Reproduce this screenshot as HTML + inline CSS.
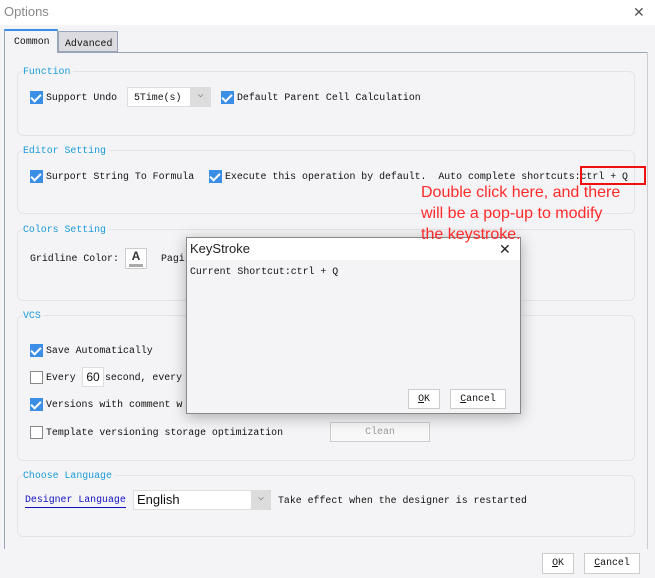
<!DOCTYPE html>
<html><head><meta charset="utf-8"><style>
*{margin:0;padding:0;box-sizing:border-box}
body{width:655px;height:578px;background:#f4f4f6;position:relative;overflow:hidden;font-family:"Liberation Mono","Noto Serif CJK SC",monospace;font-size:9.9px;color:#111}
.a{position:absolute;white-space:pre}
.t{line-height:14px}
.cb{position:absolute;width:13px;height:13px;background:#3a8ee6}
.cb::after{content:"";position:absolute;left:3px;top:1px;width:4px;height:8px;border:solid #fff;border-width:0 2px 2px 0;transform:rotate(45deg)}
.ucb{position:absolute;width:13px;height:13px;border:1px solid #888;background:#fff}
.gb{position:absolute;border:1px solid #e4e4e8;border-radius:6px}
.gt{position:absolute;color:#1a9ad8;background:#f4f4f6;padding-right:3px;line-height:13px}
.btn{position:absolute;background:#fff;border:1px solid #ccc;text-align:center;line-height:18px}
</style></head><body>
<div class="a" style="left:0;top:0;width:655px;height:25px;background:#fff"></div>
<div class="a" style="left:4px;top:4px;font:13px 'Liberation Sans',sans-serif;color:#888">Options</div>
<div class="a" style="left:633px;top:4px;font:14px 'Liberation Sans',sans-serif;color:#555">✕</div>
<div class="a" style="left:4px;top:52px;width:644px;height:497px;border-left:1px solid #9aa4b8;border-top:1px solid #9aa4b8"></div>
<div class="a" style="left:647px;top:52px;width:1px;height:497px;background:#ccc"></div>
<div class="a t" style="left:4px;top:29px;width:54px;height:24px;background:#f4f4f6;border:1px solid #9aa4b8;border-top:2px solid #3a8ee6;border-bottom:none;padding:4px 0 0 9px">Common</div>
<div class="a t" style="left:58px;top:31px;width:60px;height:21px;background:#dcdce0;border:1px solid #9aa4b8;padding:5px 0 0 6px">Advanced</div>

<div class="gb" style="left:17px;top:71px;width:618px;height:65px"></div>
<div class="gt a" style="left:23px;top:65px">Function</div>
<div class="cb" style="left:30px;top:91px"></div>
<div class="a t" style="left:46px;top:91px">Support Undo</div>
<div class="a" style="left:127px;top:87px;width:84px;height:20px;background:#fff;border:1px solid #ddd"></div>
<div class="a" style="left:190px;top:87px;width:21px;height:20px;background:#dcdcdc;color:#666;text-align:center;font-size:10px;line-height:18px">⌵</div>
<div class="a t" style="left:134px;top:91px">5Time(s)</div>
<div class="cb" style="left:221px;top:91px"></div>
<div class="a t" style="left:237px;top:91px">Default Parent Cell Calculation</div>

<div class="gb" style="left:17px;top:150px;width:618px;height:64px"></div>
<div class="gt a" style="left:23px;top:144px">Editor Setting</div>
<div class="cb" style="left:30px;top:170px"></div>
<div class="a t" style="left:46px;top:170px">Surport String To Formula</div>
<div class="cb" style="left:209px;top:170px"></div>
<div class="a t" style="left:225px;top:170px">Execute this operation by default.  Auto complete shortcuts:ctrl + Q</div>
<div class="a" style="left:580px;top:166px;width:66px;height:19px;border:2px solid #f01010"></div>
<div class="a" style="left:421px;top:182px;font:16px/21px 'Liberation Sans',sans-serif;color:#ff2a2a;z-index:5">Double click here, and there
will be a pop-up to modify
the keystroke.</div>

<div class="gb" style="left:17px;top:229px;width:618px;height:72px"></div>
<div class="gt a" style="left:23px;top:223px">Colors Setting</div>
<div class="a t" style="left:30px;top:252px">Gridline Color:</div>
<div class="a" style="left:125px;top:248px;width:22px;height:21px;border:1px solid #ccc;background:#fff;text-align:center;font:bold 12px/14px 'Liberation Sans',sans-serif;color:#333">A<div style="margin:1px 3px 0;height:3px;background:#aaa"></div></div>
<div class="a t" style="left:161px;top:252px">Pagi</div>

<div class="gb" style="left:17px;top:315px;width:618px;height:146px"></div>
<div class="gt a" style="left:23px;top:309px">VCS</div>
<div class="cb" style="left:30px;top:344px"></div>
<div class="a t" style="left:46px;top:344px">Save Automatically</div>
<div class="ucb" style="left:30px;top:371px"></div>
<div class="a t" style="left:46px;top:371px">Every</div>
<div class="a" style="left:82px;top:367px;width:22px;height:20px;background:#fff;border:1px solid #ddd;font:12px/18px 'Liberation Sans',sans-serif;text-align:center">60</div>
<div class="a t" style="left:105px;top:371px">second, every</div>
<div class="cb" style="left:30px;top:398px"></div>
<div class="a t" style="left:46px;top:398px">Versions with comment w</div>
<div class="ucb" style="left:30px;top:426px"></div>
<div class="a t" style="left:46px;top:426px">Template versioning storage optimization</div>
<div class="btn" style="left:330px;top:422px;width:100px;height:20px;color:#999;background:#f8f8f8">Clean</div>

<div class="gb" style="left:17px;top:475px;width:618px;height:62px"></div>
<div class="gt a" style="left:23px;top:469px">Choose Language</div>
<div class="a t" style="left:25px;top:493px;color:#1010c0;border-bottom:1px solid #1010c0">Designer Language</div>
<div class="a" style="left:133px;top:490px;width:138px;height:20px;background:#fff;border:1px solid #ddd;font:13px/18px 'Liberation Sans',sans-serif;padding-left:3px">English</div>
<div class="a" style="left:251px;top:490px;width:20px;height:20px;background:#dcdcdc;color:#666;text-align:center;font-size:10px;line-height:18px">⌵</div>
<div class="a t" style="left:278px;top:494px">Take effect when the designer is restarted</div>

<div class="btn" style="left:542px;top:553px;width:32px;height:21px"><u>O</u>K</div>
<div class="btn" style="left:584px;top:553px;width:56px;height:21px"><u>C</u>ancel</div>

<div class="a" style="left:186px;top:237px;width:335px;height:177px;background:#f4f4f6;border:1px solid #888;box-shadow:0 3px 14px rgba(0,0,0,.3)">
<div style="position:absolute;left:0;top:0;width:100%;height:22px;background:#fff"></div>
<div class="a" style="left:3px;top:3px;font:13px 'Liberation Sans',sans-serif;color:#222">KeyStroke</div>
<div class="a" style="left:312px;top:3px;font:14px 'Liberation Sans',sans-serif;color:#222">✕</div>
<div class="a t" style="left:3px;top:27px">Current Shortcut:ctrl + Q</div>
<div class="btn" style="left:221px;top:151px;width:32px;height:20px"><u>O</u>K</div>
<div class="btn" style="left:263px;top:151px;width:56px;height:20px"><u>C</u>ancel</div>
</div>
</body></html>
